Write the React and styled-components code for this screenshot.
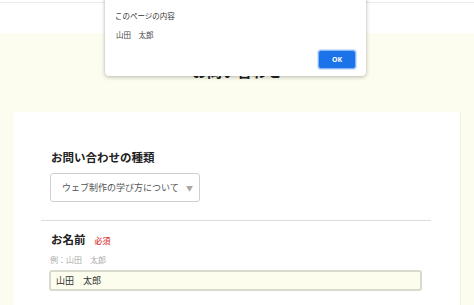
import styled, { createGlobalStyle } from "styled-components";

const GlobalStyle = createGlobalStyle`
  html, body {
    margin: 0;
    padding: 0;
    background: #fdfdef;
    font-family: "Noto Sans CJK JP", "Noto Sans", sans-serif;
    color: #222;
  }
  * { box-sizing: border-box; }
`;

const Page = styled.div`
  position: relative;
  width: 474px;
  height: 305px;
  overflow: hidden;
`;

const Header = styled.header`
  height: 33px;
  background: #fff;
  padding-top: 2px;

  .rule {
    height: 1px;
    background: #ebebeb;
  }
`;

const Main = styled.main`
  padding: 0 14px;
`;

const Title = styled.h1`
  margin: 0;
  padding-top: 28px;
  height: 79px;
  text-align: center;
  font-size: 15px;
  font-weight: 700;
  line-height: 20px;
  color: #222;
`;

const Card = styled.section`
  background: #fff;
  padding: 35px 29px 0 27px;
  min-height: 200px;
  box-shadow: 1px 0 0 #f1f1e6;
`;

const Field = styled.div`
  padding: 0 9px 0 9px;
  ${(p) => p.$divided && `
    padding-bottom: 18px;
    border-bottom: 1px solid #dcdcdc;
    margin-bottom: 8px;
  `}
`;

const Label = styled.div`
  display: flex;
  align-items: baseline;
  gap: 9px;
  font-size: ${(p) => p.$size || 11.5}px;
  font-weight: 700;
  line-height: 20px;
  margin-bottom: ${(p) => p.$gap || 6}px;
  padding-left: 1px;
`;

const Required = styled.span`
  font-size: 8px;
  font-weight: 500;
  color: #e03a3a;
`;

const Select = styled.div`
  display: flex;
  align-items: center;
  justify-content: space-between;
  width: 150px;
  height: 29px;
  padding: 0 6px 0 11px;
  border: 1px solid #cfcfcf;
  border-radius: 3px;
  font-size: 9px;
  color: #555;
  white-space: nowrap;

  .arrow {
    font-size: 7px;
    color: #a8a8a0;
  }
`;

const Hint = styled.div`
  font-size: 8px;
  color: #aaa;
  line-height: 12px;
  margin-bottom: 4px;
`;

const Input = styled.div`
  height: 21px;
  padding: 0 5px;
  display: flex;
  align-items: center;
  background: #fdfdee;
  border: 2px solid #d9d9cd;
  border-radius: 3px;
  font-size: 9px;
  color: #333;
  margin-left: -1px;
`;

const Dialog = styled.div`
  position: absolute;
  left: 105px;
  top: -4px;
  width: 261px;
  height: 80px;
  background: #fff;
  border-radius: 0 0 4px 4px;
  box-shadow: 0 1px 4px rgba(0, 0, 0, 0.28), 0 0 1px rgba(0, 0, 0, 0.2);
  padding: 13px 10px 0 10px;
`;

const DialogTitle = styled.div`
  font-size: 7.5px;
  line-height: 14px;
  color: #333;
  margin-bottom: 5px;
`;

const DialogBody = styled.div`
  font-size: 7.5px;
  line-height: 14px;
  color: #444;
  padding-left: 1px;
`;

const Actions = styled.div`
  display: flex;
  justify-content: flex-end;
  margin-top: 8px;
`;

const OkButton = styled.button`
  width: 38px;
  height: 19px;
  padding: 0;
  border: 1px solid #8ab4f8;
  border-radius: 3px;
  background: #1a73e8;
  color: #fff;
  font-family: "Noto Sans", sans-serif;
  font-size: 7px;
  font-weight: 700;
  box-shadow: 0 0 0 1px #d2e3fc;
`;

export default function App() {
  return (
    <Page>
      <GlobalStyle />
      <Header>
        <div className="rule" />
      </Header>
      <Main>
        <Title>お問い合わせ</Title>
        <Card>
          <Field $divided>
            <Label>お問い合わせの種類</Label>
            <Select>
              <span>ウェブ制作の学び方について</span>
              <span className="arrow">▼</span>
            </Select>
          </Field>
          <Field>
            <Label $size={11.5} $gap={3}>
              お名前<Required>必須</Required>
            </Label>
            <Hint>例：山田　太郎</Hint>
            <Input>山田　太郎</Input>
          </Field>
        </Card>
      </Main>
      <Dialog>
        <DialogTitle>このページの内容</DialogTitle>
        <DialogBody>山田　太郎</DialogBody>
        <Actions>
          <OkButton>OK</OkButton>
        </Actions>
      </Dialog>
    </Page>
  );
}
